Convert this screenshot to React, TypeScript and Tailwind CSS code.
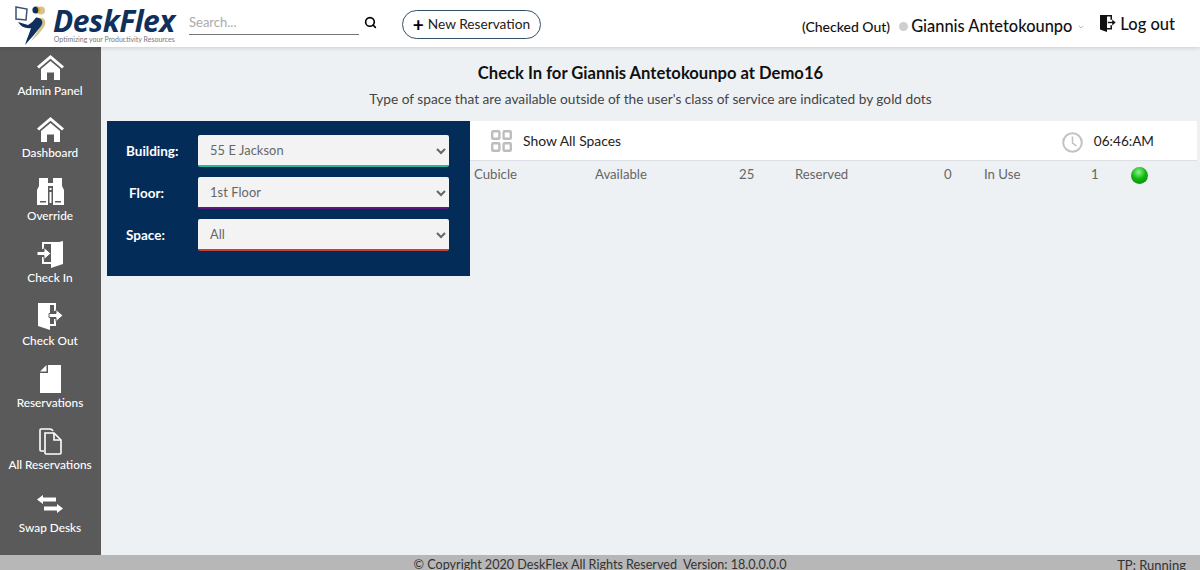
import { FC, ReactNode } from "react"
import { ChevronDown, Search } from "lucide-react"

const HomeIcon = () => (
  <svg viewBox="0 0 27 25" className="h-[25px] w-[27px]" fill="#fff">
    <path d="M13.5 0 27 11.5 25 13.6 13.5 3.8 2 13.6 0 11.5Z" />
    <path d="M4 14 13.5 6 23 14V25H17V17.5H10V25H4Z" />
  </svg>
)

const BinocularsIcon = () => (
  <svg viewBox="0 0 27 27" className="h-[27px] w-[27px]" fill="#fff">
    <path d="M2 0H11V5H16V0H25V8H2Z" />
    <path d="M2 8H11V27H0V12Z" />
    <path d="M16 8H25L27 12V27H16Z" />
    <path d="M12.5 10H14.5V12H12.5ZM12.5 14H14.5V25H12.5Z" />
    <path d="M3 23H9V24.5H3ZM18 23H24V24.5H18Z" fill="#5a5a5a" />
  </svg>
)

const CheckInIcon = () => (
  <svg viewBox="0 0 26 27" className="h-[27px] w-[26px]" fill="#fff">
    <path d="M5 1H24V3H7V8H5Z" />
    <path d="M5 16H7V21H14V23H5Z" />
    <path d="M14 3 26 0V23L14 27Z" />
    <path d="M0 10.5H7V6.5L14 12.5 7 18.5V14.5H0Z" stroke="#5a5a5a" strokeWidth="1" />
  </svg>
)

const CheckOutIcon = () => (
  <svg viewBox="0 0 25 27" className="h-[27px] w-[25px]" fill="#fff">
    <path d="M0 0H18V8H16V2H12V21H16V16H18V23H12V27L0 23Z" />
    <path d="M11 10.5H18V6.5L25 12.5 18 18.5V14.5H11Z" stroke="#5a5a5a" strokeWidth="1" />
  </svg>
)

const DocIcon = () => (
  <svg viewBox="0 0 21 28" className="h-[28px] w-[21px]" fill="#fff">
    <path d="M8 0H21V28H0V8H8Z" />
    <path d="M6.5 0V6.5H0Z" />
  </svg>
)

const DocsIcon = () => (
  <svg viewBox="0 0 23 27" className="h-[27px] w-[23px]" fill="none" stroke="#fff" strokeWidth="1.6">
    <path d="M5 23H2Q1 23 1 22V2Q1 1 2 1H11Q13 1 14 3" />
    <path d="M6 5H15L22 12V25Q22 26 21 26H7Q6 26 6 25Z" />
    <path d="M15 5V12H22" />
  </svg>
)

const SwapIcon = () => (
  <svg viewBox="0 0 26 18" className="h-[18px] w-[26px]" fill="#fff">
    <path d="M0 4.5 6 0V2.5H19V6.5H6V9Z" />
    <path d="M26 13.5 20 9V11.5H7V15.5H20V18Z" />
  </svg>
)

const LogoutIcon = () => (
  <svg viewBox="0 0 16 17" className="h-[17px] w-[16px]" fill="#111">
    <path d="M0 0H12V5H10.5V1.5H7V13H10.5V10H12V14.5H7V17L0 14.5Z" />
    <path d="M7.5 6.5H12V4L16 7.5 12 11V8.5H7.5Z" stroke="#fff" strokeWidth="0.6" />
  </svg>
)

const ClockIcon = () => (
  <svg viewBox="0 0 21 21" className="h-[21px] w-[21px]" fill="none" stroke="#c2c2c2">
    <circle cx="10.5" cy="10.5" r="9.3" strokeWidth="2" />
    <path d="M10.5 4.5V11L14.5 14" strokeWidth="1.5" />
  </svg>
)

const GridIcon = () => (
  <svg viewBox="0 0 21 22" className="h-[22px] w-[21px]" fill="none" stroke="#bdbdbd" strokeWidth="2.4">
    <rect x="1.2" y="1.2" width="7.2" height="7.6" rx="1" />
    <rect x="12.6" y="1.2" width="7.2" height="7.6" rx="1" />
    <rect x="1.2" y="13.2" width="7.2" height="7.6" rx="1" />
    <rect x="12.6" y="13.2" width="7.2" height="7.6" rx="1" />
  </svg>
)

const PersonMark = () => (
  <svg viewBox="0 0 32 40" className="h-[40px] w-[32px] shrink-0">
    <path d="M24 13C31 12 33 17 30 22 26 28 22 32 17 36 21 30 25 25 26 20Z" fill="#d3c48f" />
    <circle cx="27" cy="5.5" r="4" fill="#d3c48f" />
    <circle cx="22" cy="5" r="3.6" fill="#0f2f5c" />
    <path d="M22 1.6A3.6 3.6 0 0 1 25 8L23.5 8A5 5 0 0 0 22 1.6Z" fill="#e2a92e" />
    <path d="M2 2 13 4 12 15 2 14Z" fill="none" stroke="#3a536f" strokeWidth="1.5" />
    <path d="M4 17 14 20C18 18 20 15 22 12.5 28 13 30 17 27 21 22 28 16 34 11 40 13 33 16 27 17 23 12 24 7 22 4 17Z" fill="#0f2f5c" />
  </svg>
)

interface NavItemProps {
  icon: ReactNode
  label: string
}

const NavItem: FC<NavItemProps> = ({ icon, label }) => (
  <div className="flex h-[62.4px] flex-col items-center pr-[1px]">
    <div className="flex h-[30px] items-center justify-center">{icon}</div>
    <span className="mt-[1px] text-[11.8px] font-medium leading-[16px] text-white">{label}</span>
  </div>
)

interface FilterProps {
  label: string
  value: string
  border: string
  labelClass: string
}

const Filter: FC<FilterProps> = ({ label, value, border, labelClass }) => (
  <div className="flex items-center">
    <label className={`w-[91px] text-[13.5px] font-bold text-white ${labelClass}`}>{label}</label>
    <select
      defaultValue={value}
      className={`h-[32px] w-[251px] rounded-[2px] border-b-2 bg-[#f3f3f3] pl-[8px] text-[12.8px] tracking-[0.1px] text-[#666] ${border}`}
    >
      <option>{value}</option>
    </select>
  </div>
)

const navItems = [
  { icon: <HomeIcon />, label: "Admin Panel" },
  { icon: <HomeIcon />, label: "Dashboard" },
  { icon: <BinocularsIcon />, label: "Override" },
  { icon: <CheckInIcon />, label: "Check In" },
  { icon: <CheckOutIcon />, label: "Check Out" },
  { icon: <DocIcon />, label: "Reservations" },
  { icon: <DocsIcon />, label: "All Reservations" },
  { icon: <SwapIcon />, label: "Swap Desks" },
]

export default function App() {
  return (
    <div className="flex h-[570px] w-[1200px] flex-col overflow-hidden bg-[#eef1f4] font-['Lato',sans-serif]">
      <header className="relative z-10 flex h-[47px] shrink-0 items-center bg-white shadow-[0_1px_4px_rgba(0,0,0,0.15)]">
        <div className="mt-[2px] flex w-[189px] shrink-0 items-center pl-[14px]">
          <PersonMark />
          <div className="ml-[7px] flex flex-col items-end">
            <span className="text-[30px] font-bold italic leading-[28px] tracking-[-0.5px] text-[#0f2f5c] font-['Open_Sans',sans-serif]">DeskFlex</span>
            <span className="-ml-[3px] whitespace-nowrap text-[7px] leading-[8px] text-[#777]">Optimizing your Productivity Resources</span>
          </div>
        </div>
        <div className="mb-[3px] flex h-[25px] w-[170px] items-center border-b border-[#777] pt-[2px] text-[13px] text-[#aaa]">Search...</div>
        <Search className="ml-[5px] mb-[2px] h-[13px] w-[13px] text-black" strokeWidth={3} />
        <button className="ml-[25px] mt-[1px] flex h-[29px] w-[139px] items-center justify-center gap-[4px] rounded-full border border-[#345069] text-[13.7px] text-[#222]">
          <span className="text-[19px] font-bold leading-none text-black">+</span>
          New Reservation
        </button>
        <div className="ml-auto flex items-center pr-[25px]">
          <span className="mt-[6px] text-[14px] font-medium text-[#111]">(Checked Out)</span>
          <span className="ml-[9px] mt-[6px] h-[9px] w-[9px] rounded-full bg-[#cfcfcf]" />
          <span className="ml-[3px] mt-[5px] text-[16.4px] font-medium text-[#111]">Giannis Antetokounpo</span>
          <ChevronDown className="ml-[5px] mt-[7px] h-[8px] w-[8px] text-[#999]" />
          <span className="ml-[15px]"><LogoutIcon /></span>
          <span className="ml-[4px] mt-[2px] text-[16.5px] font-medium text-[#111]">Log out</span>
        </div>
      </header>

      <div className="flex min-h-0 flex-1">
        <aside className="w-[101px] shrink-0 bg-[#5a5a5a] pt-[5px]">
          {navItems.map((item) => (
            <NavItem key={item.label} icon={item.icon} label={item.label} />
          ))}
        </aside>

        <main className="min-w-0 flex-1">
          <div className="flex h-[74px] flex-col items-center pt-[15px]">
            <h1 className="text-[16.6px] font-bold leading-[22px] text-[#111]">Check In for Giannis Antetokounpo at Demo16</h1>
            <p className="mt-[6px] text-[13.7px] leading-[18px] text-[#444]">
              Type of space that are available outside of the user's class of service are indicated by gold dots
            </p>
          </div>

          <div className="flex pl-[6px] pr-[3px]">
            <div className="flex h-[155px] w-[363px] shrink-0 flex-col gap-[10px] bg-[#042c58] pt-[14px]">
              <Filter label="Building:" value="55 E Jackson" border="border-[#2bb89a]" labelClass="pl-[19px]" />
              <Filter label="Floor:" value="1st Floor" border="border-[#5b1a7a]" labelClass="pl-[22px] pt-[1px]" />
              <Filter label="Space:" value="All" border="border-[#c9423a]" labelClass="pl-[19px]" />
            </div>

            <div className="min-w-0 flex-1">
              <div className="flex h-[40px] items-center border-b border-[#dcdfe3] bg-white pl-[21px]">
                <GridIcon />
                <span className="ml-[11px] pt-[2px] text-[13.9px] text-[#222]">Show All Spaces</span>
                <span className="ml-auto mt-[3px]"><ClockIcon /></span>
                <span className="ml-[11px] mr-[43px] pt-[2px] text-[13.6px] text-[#222]">06:46:AM</span>
              </div>
              <div className="flex h-[28px] items-center pl-[4px] text-[13.2px] text-[#666]">
                <span className="w-[121px]">Cubicle</span>
                <span className="w-[144px]">Available</span>
                <span className="w-[56px]">25</span>
                <span className="w-[149px]">Reserved</span>
                <span className="w-[40px]">0</span>
                <span className="w-[107px]">In Use</span>
                <span className="w-[40px]">1</span>
                <span className="h-[17px] w-[17px] rounded-full bg-[radial-gradient(circle_at_45%_30%,#8cf58c,#11b911_45%,#067a06)]" />
              </div>
            </div>
          </div>
        </main>
      </div>

      <footer className="relative flex h-[15px] shrink-0 justify-center bg-[#b7b7b7] text-[12.6px] leading-[20px] text-[#333]">
        <span className="whitespace-pre">© Copyright 2020 DeskFlex All Rights Reserved  Version: 18.0.0.0.0</span>
        <span className="absolute right-[14px] top-0 text-[13px]">TP: Running</span>
      </footer>
    </div>
  )
}
